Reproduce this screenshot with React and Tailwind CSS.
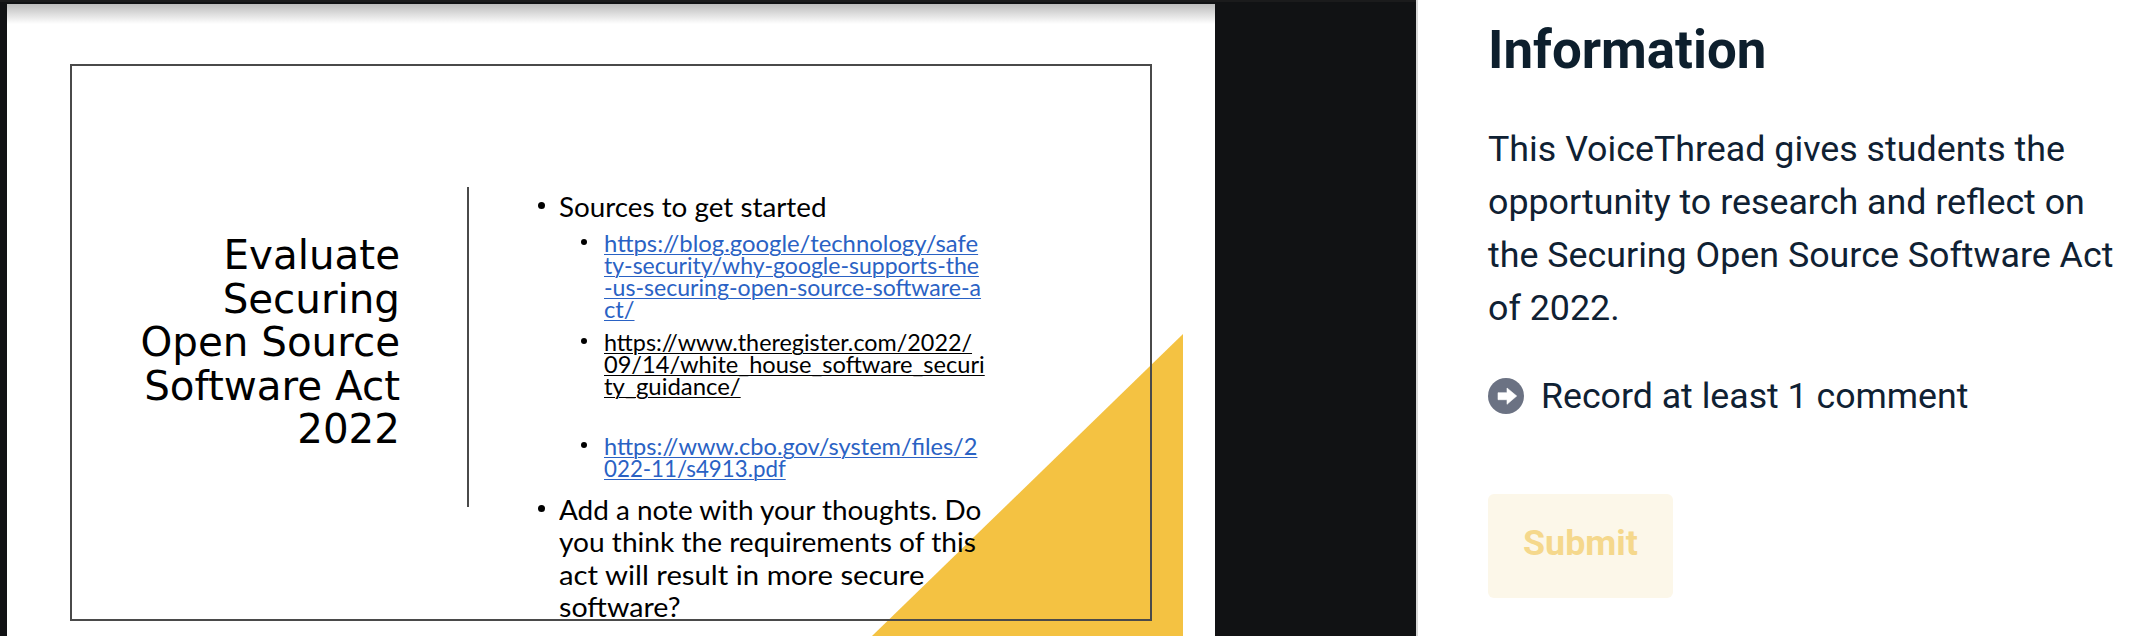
import React from 'react';

// width of each line differs a little from the slide's font, so every line carries its own stretch
const Line = ({ children, stretch = 'scale-x-[1.03]' }) => (
  <span className={`block whitespace-nowrap origin-left ${stretch}`}>{children}</span>
);

const SubItem = ({ lines, color, className = '' }) => (
  <div className={`flex text-[23px] leading-[22px] ${color} ${className}`}>
    <span className="mt-[7px] mr-[17px] h-[6px] w-[6px] shrink-0 rounded-full bg-black" />
    <div className="underline decoration-1 underline-offset-[2px]">
      {lines.map(([text, stretch]) => (
        <Line key={text} stretch={stretch}>
          {text}
        </Line>
      ))}
    </div>
  </div>
);

const Slide = () => (
  <div className="relative h-full w-[1208px] overflow-hidden bg-white">
    <div className="absolute left-0 right-0 top-0 h-[20px] bg-gradient-to-b from-[#bdbdbd] to-white" />
    <svg className="absolute left-[865px] top-[330px]" width="311" height="302" viewBox="0 0 311 302">
      <polygon points="311,0 311,302 0,302" fill="#f4c242" />
    </svg>
    <div className="relative ml-[63px] mt-[60px] flex h-[557px] w-[1082px] border-2 border-[#4a4a4a] font-['Lato',sans-serif] text-black">
      <h1 className="mt-[168px] w-[328px] shrink-0 text-right font-['DejaVu_Sans',sans-serif] text-[40.4px] font-normal leading-[43.6px]">
        Evaluate
        <br />
        Securing
        <br />
        Open Source
        <br />
        Software Act
        <br />
        2022
      </h1>
      <div className="ml-[67px] mt-[121px] h-[320px] w-[2px] shrink-0 bg-[#4a4a4a]" />
      <div className="ml-[69px] mt-[125px]">
        <div className="flex text-[27px] leading-[32px]">
          <span className="mt-[11px] mr-[14px] h-[7px] w-[7px] shrink-0 rounded-full bg-black" />
          <Line>Sources to get started</Line>
        </div>
        <div className="ml-[43px] mt-[9px]">
          <SubItem
            color="text-[#2a62c4]"
            lines={[
              ['https://blog.google/technology/safe', 'scale-x-[1.037]'],
              ['ty-security/why-google-supports-the', 'scale-x-[1.0]'],
              ['-us-securing-open-source-software-a', 'scale-x-[1.004]'],
              ['ct/', 'scale-x-[1.03]'],
            ]}
          />
          <SubItem
            className="mt-[11px]"
            color="text-black"
            lines={[
              ['https://www.theregister.com/2022/', 'scale-x-[1.015]'],
              ['09/14/white_house_software_securi', 'scale-x-[1.026]'],
              ['ty_guidance/', 'scale-x-[1.04]'],
            ]}
          />
          <SubItem
            className="mt-[38px]"
            color="text-[#2a62c4]"
            lines={[
              ['https://www.cbo.gov/system/files/2', 'scale-x-[1.025]'],
              ['022-11/s4913.pdf', 'scale-x-[0.97]'],
            ]}
          />
        </div>
        <div className="mt-[15px] flex text-[27px] leading-[32.4px]">
          <span className="mt-[11px] mr-[14px] h-[7px] w-[7px] shrink-0 rounded-full bg-black" />
          <div>
            <Line stretch="scale-x-[1.033]">Add a note with your thoughts. Do</Line>
            <Line stretch="scale-x-[1.04]">you think the requirements of this</Line>
            <Line stretch="scale-x-[1.085]">act will result in more secure</Line>
            <Line stretch="scale-x-[1.06]">software?</Line>
          </div>
        </div>
      </div>
    </div>
  </div>
);

const ArrowCircle = () => (
  <svg className="shrink-0" width="36" height="36" viewBox="0 0 36 36">
    <circle cx="18" cy="18" r="18" fill="#6b7283" />
    <path d="M10 14.7h9V10l9.7 8-9.7 8.3v-4.6h-9z" fill="#fff" stroke="#fff" strokeWidth="0.6" strokeLinejoin="round" />
  </svg>
);

const InfoPanel = () => (
  <div className="flex-1 border-l-2 border-[#d8d8d8] pl-[70px] font-['Roboto',sans-serif] text-[#0f2133]">
    <h2 className="mt-[16px] text-[52.8px] font-bold leading-[68px] text-[#0d1f2d]">Information</h2>
    <p className="mt-[39px] text-[35.8px] leading-[53px]">
      This VoiceThread gives students the
      <br />
      opportunity to research and reflect on
      <br />
      the Securing Open Source Software Act
      <br />
      of 2022.
    </p>
    <div className="mt-[38px] flex items-center gap-[17px] text-[35.7px] leading-[46px]">
      <ArrowCircle />
      <span>Record at least 1 comment</span>
    </div>
    <button className="mt-[75px] flex h-[104px] w-[185px] items-center justify-center rounded-[6px] bg-[#fcf7e9] pb-[4px] text-[35.8px] font-bold text-[#f5d88c]">
      Submit
    </button>
  </div>
);

export default function App() {
  return (
    <div className="flex h-[636px] w-[2150px] overflow-hidden bg-white">
      <div className="flex h-full w-[1416px] shrink-0 border-t-2 border-[#1b1b1c] bg-[#111214] pl-[7px] pt-[2px]">
        <Slide />
      </div>
      <InfoPanel />
    </div>
  );
}
